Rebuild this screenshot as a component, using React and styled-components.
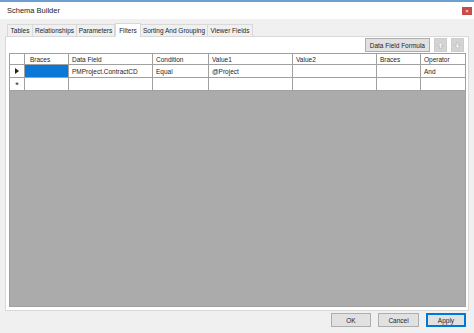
import styled, { createGlobalStyle } from "styled-components";

const GlobalStyle = createGlobalStyle`
  html, body {
    margin: 0;
    padding: 0;
    background: #f0f0f0;
  }
  body {
    font-family: "Liberation Sans", Arial, sans-serif;
    color: #1e1e1e;
  }
`;

const COLS = "15px 44px 84px 56px 84px 84px 44px 1fr";

const Window = styled.div`
  width: 474px;
  height: 333px;
  box-sizing: border-box;
  display: flex;
  flex-direction: column;
  border-top: 2px solid #6d9fd3;
  background: #f0f0f0;
  overflow: hidden;
`;

const TitleBar = styled.div`
  height: 17px;
  flex: none;
  display: flex;
  align-items: center;
  justify-content: space-between;
  padding: 0 2px 0 7px;
  background: #ffffff;
  font-size: 7.5px;
  color: #222;
`;

const CloseBtn = styled.div`
  width: 10px;
  height: 8px;
  margin-top: 1px;
  background: #c94a4a;
  color: #fff;
  font-size: 6px;
  line-height: 8px;
  text-align: center;
`;

const Content = styled.div`
  flex: 1;
  display: flex;
  flex-direction: column;
  padding: 3px 5px 6px 5px;
  min-height: 0;
`;

const TabStrip = styled.div`
  height: 14px;
  flex: none;
  display: flex;
  align-items: flex-end;
  padding-left: 2px;
`;

const Tab = styled.div`
  width: ${(p) => p.$w}px;
  height: ${(p) => (p.$active ? 14 : 12)}px;
  box-sizing: border-box;
  display: flex;
  align-items: center;
  justify-content: center;
  border: 1px solid #d9d9d9;
  border-bottom: none;
  border-left: ${(p) => (p.$first || p.$active ? "1px solid #d9d9d9" : "none")};
  background: ${(p) => (p.$active ? "#ffffff" : "#f0f0f0")};
  font-size: 6.5px;
  white-space: nowrap;
  margin-bottom: ${(p) => (p.$active ? "-1px" : "0")};
  position: relative;
  z-index: ${(p) => (p.$active ? 1 : 0)};
`;

const Panel = styled.div`
  height: 275px;
  box-sizing: border-box;
  flex: none;
  display: flex;
  flex-direction: column;
  padding: 0 1px 3px 3px;
  background: #ffffff;
  border: 1px solid #d9d9d9;
`;

const Toolbar = styled.div`
  height: 16px;
  flex: none;
  display: flex;
  justify-content: flex-end;
  align-items: flex-start;
  gap: 4px;
  padding: 1px 3px 0 0;
  box-sizing: border-box;
`;

const ToolButton = styled.div`
  height: 14px;
  box-sizing: border-box;
  padding: 0 4px;
  display: flex;
  align-items: center;
  background: #e1e1e1;
  border: 1px solid #adadad;
  font-size: 6.5px;
  white-space: nowrap;
`;

const IconButton = styled.div`
  width: 13px;
  height: 14px;
  box-sizing: border-box;
  display: flex;
  align-items: center;
  justify-content: center;
  background: #d4d4d4;
  border: 1px solid #cccccc;
`;

const Grid = styled.div`
  height: 254px;
  flex: none;
  box-sizing: border-box;
  background: #ababab;
  border: 1px solid #a0a0a0;
  width: 457px;
`;

const Row = styled.div`
  display: grid;
  grid-template-columns: ${COLS};
  height: ${(p) => p.$h}px;
  background: #ffffff;
`;

const Cell = styled.div`
  box-sizing: border-box;
  border-right: 1px solid #a0a0a0;
  border-bottom: 1px solid #a0a0a0;
  padding-left: ${(p) => p.$pad ?? 3}px;
  display: flex;
  align-items: center;
  font-size: 6.5px;
  white-space: nowrap;
  overflow: hidden;
  background: ${(p) => (p.$selected ? "#0a78d6" : "transparent")};
  &:last-child {
    border-right: none;
  }
`;

const RowHeader = styled(Cell)`
  padding-left: 0;
  justify-content: center;
  font-size: 9px;
  line-height: 1;
`;

const Footer = styled.div`
  flex: none;
  display: flex;
  justify-content: flex-end;
  gap: 7px;
  margin-top: 2px;
  padding-right: 3px;
`;

const DialogButton = styled.div`
  width: ${(p) => p.$w}px;
  height: 14px;
  box-sizing: border-box;
  display: flex;
  align-items: center;
  justify-content: center;
  background: #e1e1e1;
  border: 1px solid ${(p) => (p.$primary ? "#0078d7" : "#adadad")};
  box-shadow: ${(p) => (p.$primary ? "inset 0 0 0 1px #0078d7" : "none")};
  font-size: 6.5px;
`;

const tabs = [
  ["Tables", 26],
  ["Relationships", 44],
  ["Parameters", 38],
  ["Filters", 26],
  ["Sorting And Grouping", 67],
  ["Viewer Fields", 45],
];

const headers = ["Braces", "Data Field", "Condition", "Value1", "Value2", "Braces", "Operator"];

const rows = [
  { marker: "arrow", values: ["", "PMProject.ContractCD", "Equal", "@Project", "", "", "And"] },
  { marker: "*", values: ["", "", "", "", "", "", ""] },
];

// greyed-out move up / move down arrows
const Arrow = ({ up }) => (
  <svg width="7" height="7" viewBox="0 0 7 7" style={{ transform: up ? "none" : "rotate(180deg)" }}>
    <path d="M3.5 0.5 L6.5 3.8 L4.6 3.8 L4.6 6.5 L2.4 6.5 L2.4 3.8 L0.5 3.8 Z" fill="#eeeeee" stroke="#b5b5b5" strokeWidth="0.6" />
  </svg>
);

const Marker = ({ kind }) =>
  kind === "arrow" ? (
    <svg width="4" height="6" viewBox="0 0 4 6">
      <path d="M0 0 L4 3 L0 6 Z" fill="#222" />
    </svg>
  ) : (
    <span style={{ marginTop: 3 }}>{kind}</span>
  );

export default function App() {
  return (
    <>
      <GlobalStyle />
      <Window>
        <TitleBar>
          <span>Schema Builder</span>
          <CloseBtn>×</CloseBtn>
        </TitleBar>
        <Content>
          <TabStrip>
            {tabs.map(([label, w], i) => (
              <Tab key={label} $w={w} $first={i === 0} $active={label === "Filters"}>
                {label}
              </Tab>
            ))}
          </TabStrip>
          <Panel>
            <Toolbar>
              <ToolButton>Data Field Formula</ToolButton>
              <IconButton>
                <Arrow up />
              </IconButton>
              <IconButton>
                <Arrow />
              </IconButton>
            </Toolbar>
            <Grid>
              <Row $h={11}>
                <Cell />
                {headers.map((h, i) => (
                  <Cell key={i} $pad={i === 0 ? 5 : 3}>
                    {h}
                  </Cell>
                ))}
              </Row>
              {rows.map((r, ri) => (
                <Row key={ri} $h={13}>
                  <RowHeader>
                    <Marker kind={r.marker} />
                  </RowHeader>
                  {r.values.map((v, ci) => (
                    <Cell key={ci} $selected={ri === 0 && ci === 0}>
                      {v}
                    </Cell>
                  ))}
                </Row>
              ))}
            </Grid>
          </Panel>
          <Footer>
            <DialogButton $w={40}>OK</DialogButton>
            <DialogButton $w={41}>Cancel</DialogButton>
            <DialogButton $w={40} $primary>
              Apply
            </DialogButton>
          </Footer>
        </Content>
      </Window>
    </>
  );
}
